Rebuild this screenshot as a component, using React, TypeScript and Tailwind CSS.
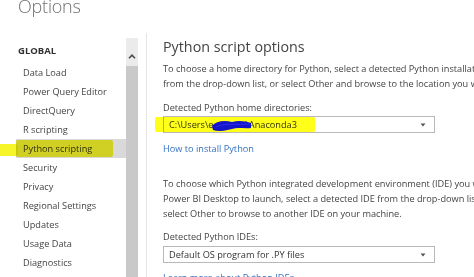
import React from "react";

const Caret = () => (
  <svg width="6" height="4" viewBox="0 0 6 4" className="shrink-0">
    <path d="M0.5 0.5 L5.5 0.5 L3 3.5 Z" fill="#555" />
  </svg>
);

const items = [
  "Data Load",
  "Power Query Editor",
  "DirectQuery",
  "R scripting",
  "Python scripting",
  "Security",
  "Privacy",
  "Regional Settings",
  "Updates",
  "Usage Data",
  "Diagnostics",
];

export default function App() {
  return (
    <div
      className="relative w-[474px] h-[277px] overflow-hidden bg-white text-[#444]"
      style={{ fontFamily: '"Open Sans", "Noto Sans", sans-serif' }}
    >
      {/* Title */}
      <div className="h-[33px] overflow-hidden pl-[18px]">
        <div className="text-[18px] font-light leading-[18px] mt-[-3px] tracking-[-0.2px] text-[#707070]">Options</div>
      </div>

      <div className="flex h-[244px]">
        {/* Sidebar */}
        <div className="flex w-[147px] border-r border-[#e4e4e4]">
          <div className="w-[110px] ml-[16px] pt-[11px]">
            <div className="h-[13px] leading-[13px] pl-[2px] text-[9.5px] font-bold text-[#333] mb-[6px]">GLOBAL</div>
            {items.map((it) => (
              <div
                key={it}
                className={`h-[19px] flex items-center pl-[7px] text-[9.2px] whitespace-nowrap ${
                  it === "Python scripting" ? "bg-[#d9d9d9] text-[#333]" : ""
                }`}
              >
                {it}
              </div>
            ))}
          </div>
          <div className="w-[12px] mt-[5px] flex flex-col">
            <div className="h-[28px] bg-[#ebebeb] flex items-center justify-center pt-[8px]">
              <svg width="8" height="5" viewBox="0 0 8 5">
                <polyline points="1,4.2 4,1.2 7,4.2" fill="none" stroke="#4a4a4a" strokeWidth="1.6" />
              </svg>
            </div>
            <div className="flex-1 bg-[#c9c9c9]" />
          </div>
        </div>

        {/* Content */}
        <div className="flex-1 pl-[16px] pt-[4px] overflow-hidden text-[9.2px] text-[#444]">
          <div className="h-[20px] leading-[20px] text-[14.3px] text-[#444] whitespace-nowrap">Python script options</div>
          <div className="mt-[4px] leading-[15px] whitespace-nowrap">
            <div>To choose a home directory for Python, select a detected Python installation</div>
            <div>from the drop-down list, or select Other and browse to the location you want.</div>
          </div>
          <div className="mt-[9px] leading-[15px] whitespace-nowrap">Detected Python home directories:</div>
          <div className="mt-[1px] w-[272px] h-[17px] border border-[#b9b9b9] flex items-center justify-between pl-[5px] pr-[8px]">
            <span className="whitespace-nowrap text-[#333]">C:\Users\e<span className="inline-block w-[32px]" />\Anaconda3</span>
            <Caret />
          </div>
          <div className="mt-[8px] leading-[15px] text-[#3572c0] whitespace-nowrap">How to install Python</div>
          <div className="mt-[20px] leading-[15px] whitespace-nowrap">
            <div>To choose which Python integrated development environment (IDE) you want</div>
            <div>Power BI Desktop to launch, select a detected IDE from the drop-down list, or</div>
            <div>select Other to browse to another IDE on your machine.</div>
          </div>
          <div className="mt-[8px] leading-[15px] whitespace-nowrap">Detected Python IDEs:</div>
          <div className="mt-[2px] w-[272px] h-[17px] border border-[#b9b9b9] flex items-center justify-between pl-[5px] pr-[8px]">
            <span className="whitespace-nowrap text-[#333]">Default OS program for .PY files</span>
            <Caret />
          </div>
          <div className="mt-[7px] leading-[15px] text-[#3572c0] whitespace-nowrap">Learn more about Python IDEs</div>
        </div>
      </div>

      {/* Highlighter marks */}
      <div className="absolute left-0 top-[144px] w-[18px] h-[12px] bg-[#f5f52a] mix-blend-multiply rounded-r-[2px]" />
      <div className="absolute left-[16px] top-[140px] w-[97px] h-[17px] bg-[#f5f52a] mix-blend-multiply rounded-[2px]" />
      <div className="absolute left-[155px] top-[117px] w-[160px] h-[15px] bg-[#ffff1a] mix-blend-multiply rounded-[2px]" />
      {/* Blue scribble redaction */}
      <svg className="absolute left-[210px] top-[117px]" width="44" height="16" viewBox="0 0 44 16">
        <path
          d="M2 9 C6 4, 14 3, 22 5 C28 3, 36 4, 41 6 L41 11 C34 12, 28 10, 22 12 C14 14, 8 15, 3 13 Z"
          fill="#1414c8"
        />
        <path d="M6 10 C14 6, 26 8, 40 7" stroke="#2a2af0" strokeWidth="1" fill="none" />
      </svg>
    </div>
  );
}
